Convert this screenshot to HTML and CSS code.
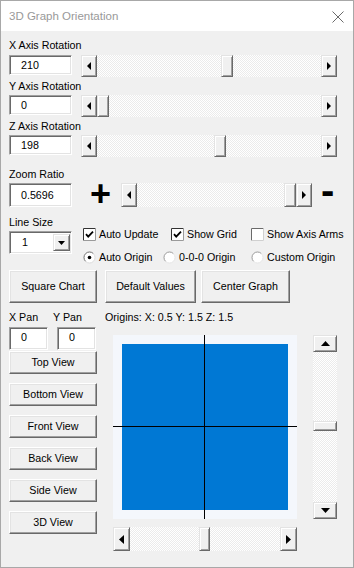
FILE: index.html
```html
<!DOCTYPE html>
<html>
<head>
<meta charset="utf-8">
<link rel="stylesheet" href="styles.css">
</head>
<body>
<div class="win">
  <div class="titlebar">
    <span class="title">3D Graph Orientation</span>
    <svg class="close" width="12" height="12" viewBox="0 0 12 12"><path d="M0.5 0.5 L11.5 11.5 M11.5 0.5 L0.5 11.5" stroke="#6b6b6b" stroke-width="1" fill="none"/></svg>
  </div>
  <div class="content">
    <div class="lbl first">X Axis Rotation</div>
    <div class="row">
      <div class="tbox">210</div>
      <div class="hs main">
        <div class="sbtn"><svg width="4" height="8" viewBox="0 0 4 8"><polygon points="4,0 4,8 0,4" fill="#000"/></svg></div>
        <div class="track"><div class="thumb" style="margin-left:124px"></div></div>
        <div class="sbtn"><svg width="4" height="8" viewBox="0 0 4 8"><polygon points="0,0 0,8 4,4" fill="#000"/></svg></div>
      </div>
    </div>
    <div class="lbl">Y Axis Rotation</div>
    <div class="row">
      <div class="tbox">0</div>
      <div class="hs main">
        <div class="sbtn"><svg width="4" height="8" viewBox="0 0 4 8"><polygon points="4,0 4,8 0,4" fill="#000"/></svg></div>
        <div class="track"><div class="thumb" style="margin-left:0px"></div></div>
        <div class="sbtn"><svg width="4" height="8" viewBox="0 0 4 8"><polygon points="0,0 0,8 4,4" fill="#000"/></svg></div>
      </div>
    </div>
    <div class="lbl">Z Axis Rotation</div>
    <div class="row">
      <div class="tbox">198</div>
      <div class="hs main">
        <div class="sbtn"><svg width="4" height="8" viewBox="0 0 4 8"><polygon points="4,0 4,8 0,4" fill="#000"/></svg></div>
        <div class="track"><div class="thumb" style="margin-left:117px"></div></div>
        <div class="sbtn"><svg width="4" height="8" viewBox="0 0 4 8"><polygon points="0,0 0,8 4,4" fill="#000"/></svg></div>
      </div>
    </div>
    <div class="lbl zoomlbl">Zoom Ratio</div>
    <div class="row zoomrow">
      <div class="tbox ztbox">0.5696</div>
      <span class="plus">+</span>
      <div class="hs zoom">
        <div class="sbtn"><svg width="4" height="8" viewBox="0 0 4 8"><polygon points="4,0 4,8 0,4" fill="#000"/></svg></div>
        <div class="track"><div class="thumb" style="margin-left:147px"></div></div>
        <div class="sbtn"><svg width="4" height="8" viewBox="0 0 4 8"><polygon points="0,0 0,8 4,4" fill="#000"/></svg></div>
      </div>
      <span class="minus">-</span>
    </div>

    <div class="options">
      <div class="linecol">
        <div class="lbl plain">Line Size</div>
        <div class="combo">
          <span class="comboval">1</span>
          <div class="dropbtn"><svg width="7" height="4" viewBox="0 0 7 4"><polygon points="0,0 7,0 3.5,4" fill="#000"/></svg></div>
        </div>
      </div>
      <div class="optcol">
        <div class="optrow">
          <div class="opt w88">
            <svg class="cb" width="13" height="13" viewBox="0 0 13 13"><rect x="0" y="0" width="13" height="13" fill="#fff"/><path d="M0.5 12.5 V0.5 H12.5" stroke="#333" fill="none"/><path d="M12.5 0.5 V12.5 H0.5" stroke="#9a9a9a" fill="none"/><polyline points="3,6.2 5.2,8.6 10,3.6" stroke="#000" stroke-width="1.8" fill="none"/></svg>
            <span>Auto Update</span>
          </div>
          <div class="opt w80">
            <svg class="cb" width="13" height="13" viewBox="0 0 13 13"><rect x="0" y="0" width="13" height="13" fill="#fff"/><path d="M0.5 12.5 V0.5 H12.5" stroke="#333" fill="none"/><path d="M12.5 0.5 V12.5 H0.5" stroke="#9a9a9a" fill="none"/><polyline points="3,6.2 5.2,8.6 10,3.6" stroke="#000" stroke-width="1.8" fill="none"/></svg>
            <span>Show Grid</span>
          </div>
          <div class="opt">
            <svg class="cb" width="13" height="13" viewBox="0 0 13 13"><rect x="0" y="0" width="13" height="13" fill="#fff"/><path d="M0.5 12.5 V0.5 H12.5" stroke="#6a6a6a" fill="none"/><path d="M12.5 0.5 V12.5 H0.5" stroke="#d0d0d0" fill="none"/></svg>
            <span>Show Axis Arms</span>
          </div>
        </div>
        <div class="optrow radios">
          <div class="opt w80">
            <svg class="rb" width="13" height="13" viewBox="0 0 13 13"><circle cx="6.5" cy="6.5" r="5.5" fill="#fff"/><path d="M2.6 10.4 A5.5 5.5 0 0 1 10.4 2.6" stroke="#707070" fill="none"/><path d="M10.4 2.6 A5.5 5.5 0 0 1 2.6 10.4" stroke="#dcdcdc" fill="none"/><circle cx="6.5" cy="6.5" r="1.8" fill="#000"/></svg>
            <span>Auto Origin</span>
          </div>
          <div class="opt w88">
            <svg class="rb" width="13" height="13" viewBox="0 0 13 13"><circle cx="6.5" cy="6.5" r="5.5" fill="#fff"/><path d="M2.6 10.4 A5.5 5.5 0 0 1 10.4 2.6" stroke="#9a9a9a" fill="none"/><path d="M10.4 2.6 A5.5 5.5 0 0 1 2.6 10.4" stroke="#e6e6e6" fill="none"/></svg>
            <span>0-0-0 Origin</span>
          </div>
          <div class="opt">
            <svg class="rb" width="13" height="13" viewBox="0 0 13 13"><circle cx="6.5" cy="6.5" r="5.5" fill="#fff"/><path d="M2.6 10.4 A5.5 5.5 0 0 1 10.4 2.6" stroke="#9a9a9a" fill="none"/><path d="M10.4 2.6 A5.5 5.5 0 0 1 2.6 10.4" stroke="#e6e6e6" fill="none"/></svg>
            <span>Custom Origin</span>
          </div>
        </div>
      </div>
    </div>

    <div class="btnrow">
      <button class="btn b1">Square Chart</button>
      <button class="btn b2">Default Values</button>
      <button class="btn b3">Center Graph</button>
    </div>

    <div class="bottom">
      <div class="leftcol">
        <div class="panlabels"><span class="panl">X Pan</span><span class="panl">Y Pan</span></div>
        <div class="panboxes"><div class="tbox pan">0</div><div class="tbox pan">0</div></div>
        <button class="btn vbtn top">Top View</button>
        <button class="btn vbtn">Bottom View</button>
        <button class="btn vbtn">Front View</button>
        <button class="btn vbtn">Back View</button>
        <button class="btn vbtn">Side View</button>
        <button class="btn vbtn">3D View</button>
      </div>
      <div class="rightcol">
        <div class="origins">Origins: X: 0.5 Y: 1.5 Z: 1.5</div>
        <div class="chartrow">
          <div class="chart">
            <div class="plane"></div>
            <div class="axis vline"></div>
            <div class="axis hline"></div>
          </div>
          <div class="vs">
            <div class="sbtn vbtn2"><svg width="9" height="5" viewBox="0 0 9 5"><polygon points="0,5 9,5 4.5,0" fill="#000"/></svg></div>
            <div class="vtrack"><div class="vthumb" style="margin-top:69px"></div></div>
            <div class="sbtn vbtn2"><svg width="9" height="5" viewBox="0 0 9 5"><polygon points="0,0 9,0 4.5,5" fill="#000"/></svg></div>
          </div>
        </div>
        <div class="hs small">
          <div class="sbtn"><svg width="5" height="9" viewBox="0 0 5 9"><polygon points="5,0 5,9 0,4.5" fill="#000"/></svg></div>
          <div class="track"><div class="thumb" style="margin-left:69px"></div></div>
          <div class="sbtn"><svg width="5" height="9" viewBox="0 0 5 9"><polygon points="0,0 0,9 5,4.5" fill="#000"/></svg></div>
        </div>
      </div>
    </div>
  </div>
</div>
</body>
</html>
```

FILE: styles.css
```css
* { box-sizing: border-box; }
html, body { margin: 0; padding: 0; }
body {
  width: 354px;
  height: 568px;
  overflow: hidden;
  background: #fff;
  font: 10.7px/13px "Liberation Sans", Arial, sans-serif;
  color: #000;
}
.win {
  width: 354px;
  height: 568px;
  border: 1px solid #a8a8a8;
  background: #f0f0f0;
  display: flex;
  flex-direction: column;
}
.titlebar {
  height: 30px;
  flex: 0 0 30px;
  background: #fff;
  display: flex;
  align-items: center;
  justify-content: space-between;
  padding: 0 9px 0 8px;
}
.title {
  font-size: 11.5px;
  line-height: 14px;
  color: #999;
}
.close { display: block; margin-top: 1px; }
.content {
  padding: 8px 0 0 8px;
  display: flex;
  flex-direction: column;
}
.lbl { height: 13px; line-height: 13px; margin: 3px 0 2px; }
.lbl.first { margin-top: 0; margin-bottom: 3px; }
.lbl.zoomlbl { margin-top: 11px; }
.lbl.plain { margin: 0 0 2px; }

.row { display: flex; align-items: flex-start; gap: 9px; height: 22px; }

.tbox {
  width: 63px;
  height: 20px;
  background: #fff;
  border: 1px solid;
  border-color: #a0a0a0 #fff #fff #a0a0a0;
  box-shadow: inset 1px 1px #696969, inset -1px -1px #e3e3e3;
  padding-left: 11px;
  line-height: 18px;
}

.sbtn, .thumb, .vthumb {
  background: #f0f0f0;
  border: 1px solid;
  border-color: #e3e3e3 #696969 #696969 #e3e3e3;
  box-shadow: inset 1px 1px #fff, inset -1px -1px #a0a0a0;
}
.sbtn {
  width: 16px;
  height: 100%;
  flex: 0 0 auto;
  display: flex;
  align-items: center;
  justify-content: center;
}
.sbtn svg { display: block; }
.hs { display: flex; height: 22px; width: 256px; }
.track {
  flex: 1;
  display: flex;
  background: repeating-conic-gradient(#fff 0 25%, #ebebeb 0 50%) 0 0 / 2px 2px;
}
.thumb { width: 12px; height: 100%; flex: 0 0 auto; }

.zoomrow { height: 24px; gap: 0; }
.ztbox { height: 24px; line-height: 22px; }
.plus {
  font: bold 36px/24px "Liberation Sans", Arial, sans-serif;
  width: 20px;
  margin-left: 18px;
  height: 24px;
  position: relative;
  top: -1px;
}
.hs.zoom { width: 191px; height: 24px; margin-left: 11px; }
.minus {
  font: bold 40px/24px "Liberation Sans", Arial, sans-serif;
  margin-left: 9px;
  height: 24px;
  position: relative;
  top: -5px;
}

.options { display: flex; gap: 11px; margin-top: 9px; }
.linecol { width: 63px; display: flex; flex-direction: column; }
.combo {
  width: 63px;
  height: 23px;
  background: #fff;
  border: 1px solid;
  border-color: #a0a0a0 #fff #fff #a0a0a0;
  box-shadow: inset 1px 1px #696969, inset -1px -1px #e3e3e3;
  display: flex;
  align-items: center;
  justify-content: space-between;
  padding: 2px 1px 2px 12px;
}
.comboval { line-height: 13px; }
.dropbtn {
  width: 17px;
  height: 100%;
  background: #f0f0f0;
  border: 1px solid;
  border-color: #e3e3e3 #696969 #696969 #e3e3e3;
  box-shadow: inset 1px 1px #fff, inset -1px -1px #a0a0a0;
  display: flex;
  align-items: center;
  justify-content: center;
}
.dropbtn svg { display: block; }

.optcol { display: flex; flex-direction: column; gap: 9px; padding-top: 11px; }
.optrow { display: flex; height: 14px; align-items: center; }
.opt { display: flex; align-items: center; gap: 3px; white-space: nowrap; }
.opt svg { display: block; flex: 0 0 auto; }
.w88 { width: 88px; }
.w80 { width: 80px; }

.btnrow { display: flex; margin-top: 6px; }
.btn {
  font: 10.7px/13px "Liberation Sans", Arial, sans-serif;
  color: #000;
  padding: 0;
  margin: 0;
  background: #f0f0f0;
  border: 1px solid;
  border-color: #fff #696969 #696969 #fff;
  box-shadow: inset -1px -1px #a0a0a0, inset 1px 1px #e3e3e3;
  display: flex;
  align-items: center;
  justify-content: center;
  border-radius: 0;
}
.btnrow .btn { height: 33px; }
.b1 { width: 88px; }
.b2 { width: 91px; margin-left: 8px; }
.b3 { width: 89px; margin-left: 5px; }

.bottom { display: flex; gap: 8px; margin-top: 8px; }
.leftcol { width: 88px; display: flex; flex-direction: column; }
.panlabels { display: flex; height: 13px; }
.panl { width: 48px; }
.panboxes { display: flex; gap: 9px; margin-top: 3px; }
.tbox.pan { width: 39px; height: 23px; line-height: 19px; }
.vbtn { width: 88px; height: 23px; margin-top: 9px; }
.vbtn.top { margin-top: 1px; }

.rightcol { display: flex; flex-direction: column; }
.origins { height: 13px; }
.chartrow { display: flex; gap: 16px; margin: 11px 0 0 8px; }
.chart {
  width: 184px;
  height: 184px;
  background: #f4f7fc;
  padding: 9px;
  position: relative;
}
.plane { width: 100%; height: 100%; background: #0078d4; }
.axis { position: absolute; background: #000; }
.vline { left: 91px; top: 0; width: 1px; height: 184px; }
.hline { top: 91px; left: 0; height: 1px; width: 184px; }

.vs { width: 24px; height: 184px; display: flex; flex-direction: column; }
.sbtn.vbtn2 { width: 24px; height: 17px; }
.vtrack {
  flex: 1;
  background: repeating-conic-gradient(#fff 0 25%, #ebebeb 0 50%) 0 0 / 2px 2px;
}
.vthumb { width: 24px; height: 10px; }

.hs.small { width: 184px; height: 24px; margin: 8px 0 0 8px; }
.hs.small .sbtn { width: 17px; }
.hs.small .thumb { width: 11px; }
```
